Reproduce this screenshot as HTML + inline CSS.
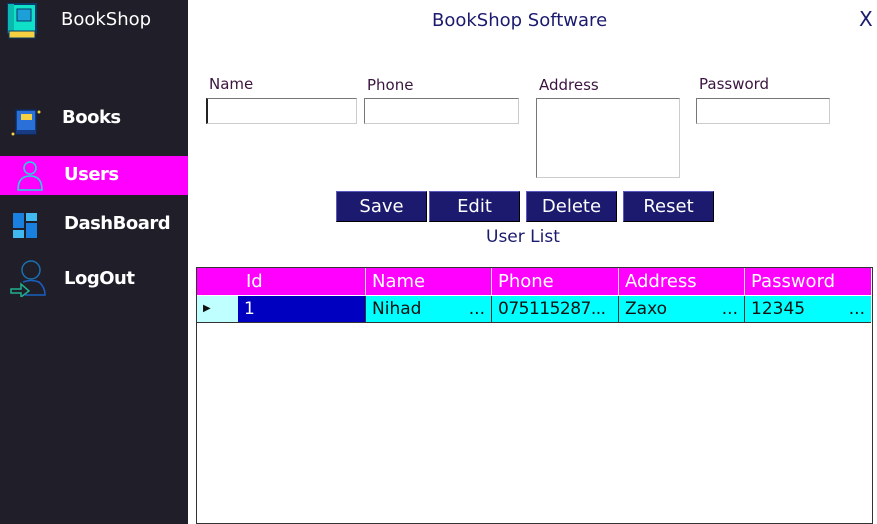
<!DOCTYPE html><html><head><style>
body{margin:0;width:877px;height:524px;position:relative;background:#fff;font-family:"DejaVu Sans","Liberation Sans",sans-serif;overflow:hidden}
.a{position:absolute}
.side{left:0;top:0;width:188px;height:524px;background:#1f1e29}
.nav{color:#fff;font-weight:bold;font-size:18px;letter-spacing:-0.5px}
.lbl{color:#3b1540;font-size:15px}
.in{background:#fff;border:1px solid #ccc;border-top-color:#777;border-left-color:#777;box-sizing:border-box}
.btn{background:#1b1a6e;color:#fff;font-size:18px;text-align:center;line-height:30px;height:31px;box-sizing:border-box;border:1px solid #5a5ac0;border-right-color:#000;border-bottom-color:#000}
.c{position:absolute;top:0;height:100%;border-left:1px solid #ddd;box-sizing:border-box;padding-left:6px;font-size:17px;line-height:28px}
</style></head><body>
<div class="a side"></div>
<svg class="a" style="left:7px;top:3px" width="32" height="37"><rect x="1" y="1" width="28" height="29" fill="#10e0c8" stroke="#0a3a6a" stroke-width="2"/><rect x="1" y="1" width="6" height="29" fill="#0bb8b0"/><rect x="10" y="6" width="14" height="12" fill="#1da0d8" stroke="#0a3a6a"/><rect x="2" y="28" width="26" height="7" fill="#f5d040" stroke="#0a3a6a"/></svg>
<div class="a" style="left:61px;top:9px;color:#fff;font-size:18px">BookShop</div>
<svg class="a" style="left:10px;top:108px" width="32" height="28"><rect x="6" y="2" width="20" height="24" fill="#2a70d8" stroke="#0a2a60" stroke-width="1.5"/><rect x="11" y="6" width="11" height="6" fill="#f5d040"/><rect x="6" y="22" width="20" height="4" fill="#173a80"/><circle cx="29" cy="4" r="1.5" fill="#f5d040"/><circle cx="3" cy="26" r="1.5" fill="#f5d040"/></svg>
<div class="a nav" style="left:62px;top:107px">Books</div>
<div class="a" style="left:0;top:156px;width:188px;height:39px;background:#ff00ff"></div>
<svg class="a" style="left:16px;top:160px" width="28" height="32"><circle cx="14" cy="8" r="6" fill="none" stroke="#22d8e0" stroke-width="1.5"/><path d="M2 30 Q2 16 14 16 Q26 16 26 30 Z" fill="none" stroke="#22d8e0" stroke-width="1.5"/></svg>
<div class="a nav" style="left:64px;top:164px">Users</div>
<svg class="a" style="left:12px;top:212px" width="28" height="28"><rect x="1" y="1" width="11" height="15" fill="#1a80e0"/><rect x="1" y="18" width="11" height="8" fill="#40b8f0"/><rect x="14" y="1" width="11" height="8" fill="#40b8f0"/><rect x="14" y="11" width="11" height="15" fill="#1a80e0"/></svg>
<div class="a nav" style="left:64px;top:213px">DashBoard</div>
<svg class="a" style="left:9px;top:259px" width="40" height="38"><circle cx="22" cy="11" r="9" fill="none" stroke="#1a70b0" stroke-width="1.5"/><path d="M14 23 Q22 20 30 23 Q36 28 36 36 L16 36" fill="none" stroke="#1a60c0" stroke-width="1.5"/><path d="M2 30 L12 30 L12 25 L20 32 L12 38 L12 34 L2 34 Z" fill="none" stroke="#20b090" stroke-width="1.5"/></svg>
<div class="a nav" style="left:64px;top:268px">LogOut</div>
<div class="a" style="left:432px;top:10px;color:#1b1a6e;font-size:18px">BookShop Software</div>
<div class="a" style="left:859px;top:7px;color:#1b1a6e;font-size:20px">X</div>
<div class="a lbl" style="left:209px;top:75px">Name</div>
<div class="a lbl" style="left:367px;top:76px">Phone</div>
<div class="a lbl" style="left:539px;top:76px">Address</div>
<div class="a lbl" style="left:699px;top:75px">Password</div>
<div class="a in" style="left:206px;top:98px;width:151px;height:26px;border-left:2px solid #222"></div>
<div class="a in" style="left:364px;top:98px;width:155px;height:26px"></div>
<div class="a in" style="left:536px;top:98px;width:144px;height:80px"></div>
<div class="a in" style="left:696px;top:98px;width:134px;height:26px"></div>
<div class="a btn" style="left:336px;top:191px;width:91px">Save</div>
<div class="a btn" style="left:429px;top:191px;width:91px">Edit</div>
<div class="a btn" style="left:526px;top:191px;width:91px">Delete</div>
<div class="a btn" style="left:623px;top:191px;width:91px">Reset</div>
<div class="a" style="left:486px;top:227px;color:#1b1a6e;font-size:17px">User List</div>
<div class="a" style="left:196px;top:267px;width:677px;height:257px;border:1px solid #333;box-sizing:border-box"></div>
<div class="a" style="left:197px;top:268px;width:674px;height:27px;background:#ff00ff;color:#fff">
<div class="c" style="left:41px;width:127px;border:0;padding-left:8px;font-size:18px">Id</div><div class="c" style="left:168px;width:126px;font-size:18px">Name</div><div class="c" style="left:294px;width:127px;font-size:18px">Phone</div><div class="c" style="left:421px;width:126px;font-size:18px">Address</div><div class="c" style="left:547px;width:127px;font-size:18px">Password</div></div>
<div class="a" style="left:197px;top:296px;width:674px;height:26px;background:#00ffff;color:#111;border-bottom:1px solid #333">
<div class="c" style="left:0;width:41px;background:#c0ffff;border:0;font-size:10px;line-height:26px">▶</div>
<div class="c" style="left:41px;width:127px;background:#0000c0;color:#fff;border:0;line-height:26px">1</div>
<div class="c" style="left:168px;width:126px;border-color:#333;line-height:26px">Nihad<span style="position:absolute;right:6px">...</span></div>
<div class="c" style="left:294px;width:127px;border-color:#333;line-height:26px;letter-spacing:-0.5px">075115287...</div>
<div class="c" style="left:421px;width:126px;border-color:#333;line-height:26px">Zaxo<span style="position:absolute;right:6px">...</span></div>
<div class="c" style="left:547px;width:127px;border-color:#333;line-height:26px">12345<span style="position:absolute;right:6px">...</span></div></div>
</body></html>
